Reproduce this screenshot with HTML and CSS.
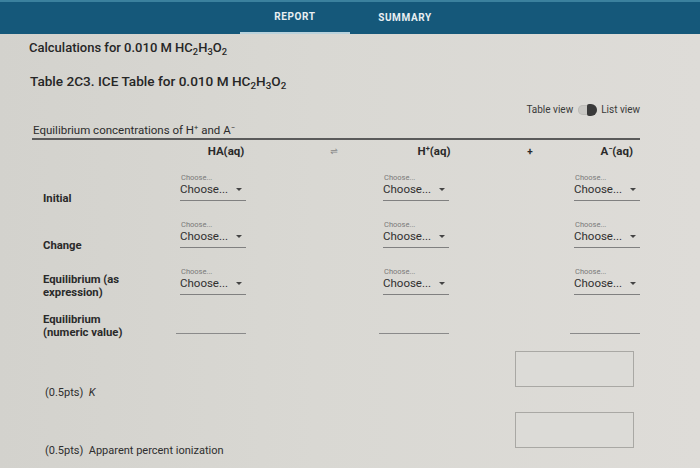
FILE: index.html
```html
<!DOCTYPE html>
<html>
<head>
<meta charset="utf-8">
<link rel="stylesheet" href="styles.css">
</head>
<body>
<header class="topbar">
  <nav class="tabs">
    <div class="tab active">REPORT</div>
    <div class="tab">SUMMARY</div>
  </nav>
</header>
<main class="content">
  <h1 class="title">Calculations for 0.010 M HC<sub>2</sub>H<sub>3</sub>O<sub>2</sub></h1>
  <h2 class="subtitle">Table 2C3. ICE Table for 0.010 M HC<sub>2</sub>H<sub>3</sub>O<sub>2</sub></h2>
  <div class="viewtoggle">
    <span>Table view</span>
    <span class="switch"><span class="thumb"></span></span>
    <span>List view</span>
  </div>
  <section class="ice">
    <div class="caption">Equilibrium concentrations of H<sup>+</sup> and A<sup>&minus;</sup></div>
    <div class="headrow">
      <div></div>
      <div class="hcell">HA(aq)</div>
      <div class="hcell sym">&#8652;</div>
      <div class="hcell">H<sup>+</sup>(aq)</div>
      <div class="hcell plus">+</div>
      <div class="hcell">A<sup>&minus;</sup>(aq)</div>
    </div>

    <div class="row">
      <div class="rlabel">Initial</div>
      <div class="cell"><div class="select"><div class="flabel">Choose...</div><div class="fvalue">Choose... <span class="caret"></span></div></div></div>
      <div class="cell"><div class="select"><div class="flabel">Choose...</div><div class="fvalue">Choose... <span class="caret"></span></div></div></div>
      <div class="cell"><div class="select"><div class="flabel">Choose...</div><div class="fvalue">Choose... <span class="caret"></span></div></div></div>
    </div>
    <div class="row">
      <div class="rlabel">Change</div>
      <div class="cell"><div class="select"><div class="flabel">Choose...</div><div class="fvalue">Choose... <span class="caret"></span></div></div></div>
      <div class="cell"><div class="select"><div class="flabel">Choose...</div><div class="fvalue">Choose... <span class="caret"></span></div></div></div>
      <div class="cell"><div class="select"><div class="flabel">Choose...</div><div class="fvalue">Choose... <span class="caret"></span></div></div></div>
    </div>
    <div class="row">
      <div class="rlabel">Equilibrium (as expression)</div>
      <div class="cell"><div class="select"><div class="flabel">Choose...</div><div class="fvalue">Choose... <span class="caret"></span></div></div></div>
      <div class="cell"><div class="select"><div class="flabel">Choose...</div><div class="fvalue">Choose... <span class="caret"></span></div></div></div>
      <div class="cell"><div class="select"><div class="flabel">Choose...</div><div class="fvalue">Choose... <span class="caret"></span></div></div></div>
    </div>
    <div class="row short">
      <div class="rlabel">Equilibrium (numeric value)</div>
      <div class="cell"><div class="blank"></div></div>
      <div class="cell"><div class="blank"></div></div>
      <div class="cell"><div class="blank"></div></div>
    </div>
  </section>

  <div class="answer first">
    <div class="alabel">(0.5pts)&nbsp; <i>K</i></div>
    <div class="abox"></div>
  </div>
  <div class="answer second">
    <div class="alabel">(0.5pts)&nbsp; Apparent percent ionization</div>
    <div class="abox"></div>
  </div>
</main>
</body>
</html>
```

FILE: styles.css
```css
* { box-sizing: border-box; }
html, body { margin: 0; padding: 0; }
body {
  width: 700px;
  height: 468px;
  overflow: hidden;
  font-family: Roboto, "Liberation Sans", sans-serif;
  color: #262626;
  background: linear-gradient(90deg, #d3d2cd 0%, #d9d8d3 45%, #dedcd8 100%);
}
.topbar {
  height: 34px;
  background: #15587a;
  border-top: 2px solid #3b819e;
}
.tabs {
  display: flex;
  justify-content: center;
  height: 100%;
}
.tab {
  width: 110px;
  height: 32px;
  display: flex;
  align-items: center;
  justify-content: center;
  color: #e9eff2;
  font-size: 10px;
  font-weight: 700;
  letter-spacing: 0.6px;
  padding-bottom: 1px;
}
.tab.active {
  border-bottom: 2px solid #b9d2dc;
}
.content {
  padding: 0 0 0 29px;
}
sub { font-size: 0.72em; vertical-align: -0.3em; line-height: 0; }
sup { font-size: 0.65em; vertical-align: 0.55em; line-height: 0; }
.title {
  margin: 6px 0 0 0;
  font-size: 13px;
  line-height: 16px;
  font-weight: 500;
}
.subtitle {
  margin: 17px 0 0 1px;
  font-size: 13.6px;
  line-height: 16px;
  font-weight: 500;
}
.viewtoggle {
  margin: 14px 0 0 0;
  width: 611px;
  display: flex;
  justify-content: flex-end;
  align-items: center;
  gap: 3px;
  font-size: 10px;
  line-height: 14px;
  color: #3a3a3a;
}
.switch {
  position: relative;
  width: 19px;
  height: 10px;
  border-radius: 5px;
  background: #c9c8c4;
  box-shadow: inset 0 0 0 1px #bdbcb8;
  margin: 0 1px 0 2px;
}
.thumb {
  position: absolute;
  right: 0;
  top: -1px;
  width: 10px;
  height: 12px;
  border-radius: 2px 6px 6px 2px;
  background: #3a3a3a;
}
.ice {
  margin: 6px 0 0 3px;
  width: 608px;
}
.caption {
  font-size: 11.5px;
  line-height: 15px;
  padding: 0 0 0 1px;
  border-bottom: 2px solid #5a5a5a;
  color: #2c2c2c;
}
.headrow {
  display: grid;
  grid-template-columns: 137px 114px 102px 98px 94px 63px;
  height: 22px;
  align-items: center;
}
.hcell {
  text-align: center;
  font-size: 11.5px;
  font-weight: 700;
  white-space: nowrap;
  color: #2a2a2a;
}
.hcell.sym {
  font-family: "DejaVu Sans", sans-serif;
  font-weight: 400;
  font-size: 9px;
  color: #888;
}
.hcell.plus { font-size: 10px; }
.hcell:last-child { text-align: right; padding-right: 7px; }
.row {
  display: grid;
  grid-template-columns: 148px 203px 191px 66px;
  height: 47px;
  align-items: end;
}
.row.short { height: 40px; }
.rlabel {
  padding: 0 0 4px 11px;
  max-width: 104px;
  font-size: 11.3px;
  line-height: 13px;
  font-weight: 700;
  color: #2a2a2a;
}
.cell {
  padding-bottom: 8px;
}
.row.short .cell { padding-bottom: 9px; }
.select {
  width: 66px;
  border-bottom: 1px solid #808080;
  padding-bottom: 4px;
}
.flabel {
  font-size: 7.5px;
  line-height: 9px;
  color: #7a7a7a;
  padding-left: 1px;
}
.fvalue {
  font-size: 11.5px;
  line-height: 14px;
  color: #303030;
  white-space: nowrap;
  display: flex;
  align-items: center;
  gap: 4px;
}
.caret {
  display: inline-block;
  width: 0;
  height: 0;
  border-left: 3px solid transparent;
  border-right: 3px solid transparent;
  border-top: 3px solid #444;
  margin-left: 4px;
}
.blank {
  width: 70px;
  border-bottom: 1px solid #8a8a8a;
  margin-left: -4px;
}
.answer {
  display: flex;
  align-items: flex-end;
  justify-content: space-between;
  width: 605px;
  padding-left: 16px;
}
.answer.first { margin-top: 8px; }
.answer.second { margin-top: 22px; }
.alabel {
  font-size: 11px;
  line-height: 14px;
  color: #2e2e2e;
}
.first .alabel { margin-bottom: -10px; }
.second .alabel { margin-bottom: -7px; }
.alabel i { font-style: italic; }
.abox {
  width: 119px;
  height: 36px;
  border: 1px solid #a9a8a4;
  background: #dcdbd7;
  margin-bottom: 3px;
}
```
